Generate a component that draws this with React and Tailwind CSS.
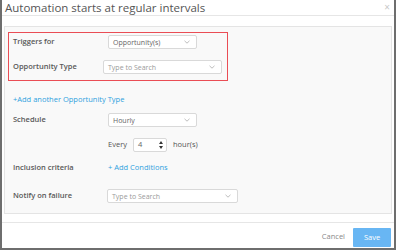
import React from "react";

const Chevron = () => (
  <svg width="6" height="4" viewBox="0 0 6 4" className="shrink-0">
    <polyline points="0.5,0.8 3,3.2 5.5,0.8" fill="none" stroke="#b5b5b5" strokeWidth="0.9" />
  </svg>
);

const Select = ({ text, placeholder, w }) => (
  <div
    className={`h-[14px] ${w} bg-white border border-[#d9d9d9] rounded-[2px] flex items-center justify-between pl-[4px] pr-[6px]`}
  >
    <span className={`text-[7px] leading-none ${placeholder ? "text-[#9a9a9a]" : "text-[#666]"}`}>{text}</span>
    <Chevron />
  </div>
);

const Label = ({ children, w }) => (
  <span className={`${w} text-[7.5px] font-semibold text-[#585858] leading-none`}>{children}</span>
);

export default function App() {
  return (
    <div
      className="w-[396px] h-[250px] bg-white border-l-2 border-r-2 border-b-2 border-[#6e6e6e] flex flex-col overflow-hidden"
      style={{ fontFamily: '"Open Sans", "Liberation Sans", sans-serif' }}
    >
      {/* header */}
      <div className="h-[16px] shrink-0 border-b border-[#e6e6e6] flex items-start justify-between pl-[3px] pr-[4px]">
        <span className="text-[11.5px] leading-[15px] text-[#555]">Automation starts at regular intervals</span>
        <span className="text-[10px] leading-[12px] text-[#c8c8c8] mt-[1px]">×</span>
      </div>

      {/* body panel */}
      <div className="mt-[10px] mx-[2px] h-[188px] shrink-0 bg-[#f9f9f9] border border-[#e4e4e4] flex flex-col">
        {/* red box */}
        <div className="mt-[5px] ml-[3px] w-[220px] h-[49px] border border-[#ea4d55] flex flex-col pt-[2px] pl-[4px]">
          <div className="h-[14px] flex items-center">
            <Label w="w-[95px]">Triggers for</Label>
            <Select text="Opportunity(s)" w="w-[89px]" />
          </div>
          <div className="h-[14px] mt-[11px] flex items-center">
            <Label w="w-[90px]">Opportunity Type</Label>
            <Select text="Type to Search" placeholder w="w-[119px]" />
          </div>
        </div>

        <div className="mt-[14px] h-[10px] pl-[8px] flex items-center">
          <span className="text-[7.5px] leading-none text-[#2ea1de]">+Add another Opportunity Type</span>
        </div>

        <div className="mt-[8px] h-[14px] pl-[8px] flex items-center">
          <Label w="w-[95px]">Schedule</Label>
          <Select text="Hourly" w="w-[89px]" />
        </div>

        <div className="mt-[11px] h-[14px] pl-[103px] flex items-center">
          <span className="text-[7.5px] text-[#555] leading-none">Every</span>
          <div className="ml-[6px] w-[34px] h-[14px] bg-white border border-[#d9d9d9] rounded-[2px] flex items-center justify-between pl-[4px] pr-[3px]">
            <span className="text-[7.5px] leading-none text-[#666]">4</span>
            <div className="flex flex-col gap-[2px]">
              <svg width="4" height="3" viewBox="0 0 4 3"><polygon points="2,0 4,3 0,3" fill="#333" /></svg>
              <svg width="4" height="3" viewBox="0 0 4 3"><polygon points="0,0 4,0 2,3" fill="#333" /></svg>
            </div>
          </div>
          <span className="ml-[6px] text-[7.5px] text-[#555] leading-none">hour(s)</span>
        </div>

        <div className="mt-[11px] h-[10px] pl-[8px] flex items-center">
          <Label w="w-[95px]">Inclusion criteria</Label>
          <span className="text-[7.5px] leading-none text-[#2ea1de]">+ Add Conditions</span>
        </div>

        <div className="mt-[16px] h-[14px] pl-[8px] flex items-center">
          <Label w="w-[94px]">Notify on failure</Label>
          <Select text="Type to Search" placeholder w="w-[131px]" />
        </div>
      </div>

      {/* footer */}
      <div className="mt-[8px] h-[26px] shrink-0 border-t border-[#e6e6e6] flex items-start justify-end pt-[5px] pr-[3px]">
        <span className="mt-[5px] text-[7.5px] leading-none text-[#8a8a8a]">Cancel</span>
        <div className="ml-[8px] w-[38px] h-[19px] bg-[#68b6f3] rounded-[1px] flex items-center justify-center">
          <span className="text-[7.5px] leading-none text-white">Save</span>
        </div>
      </div>
    </div>
  );
}
